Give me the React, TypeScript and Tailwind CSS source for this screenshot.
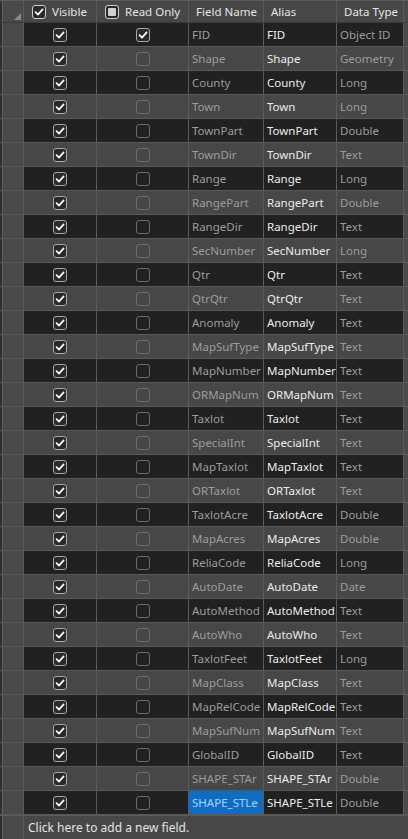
import React from "react";

type Row = { name: string; alias: string; type: string; ro?: boolean };

const rows: Row[] = [
  { name: "FID", alias: "FID", type: "Object ID", ro: true },
  { name: "Shape", alias: "Shape", type: "Geometry" },
  { name: "County", alias: "County", type: "Long" },
  { name: "Town", alias: "Town", type: "Long" },
  { name: "TownPart", alias: "TownPart", type: "Double" },
  { name: "TownDir", alias: "TownDir", type: "Text" },
  { name: "Range", alias: "Range", type: "Long" },
  { name: "RangePart", alias: "RangePart", type: "Double" },
  { name: "RangeDir", alias: "RangeDir", type: "Text" },
  { name: "SecNumber", alias: "SecNumber", type: "Long" },
  { name: "Qtr", alias: "Qtr", type: "Text" },
  { name: "QtrQtr", alias: "QtrQtr", type: "Text" },
  { name: "Anomaly", alias: "Anomaly", type: "Text" },
  { name: "MapSufType", alias: "MapSufType", type: "Text" },
  { name: "MapNumber", alias: "MapNumber", type: "Text" },
  { name: "ORMapNum", alias: "ORMapNum", type: "Text" },
  { name: "Taxlot", alias: "Taxlot", type: "Text" },
  { name: "SpecialInt", alias: "SpecialInt", type: "Text" },
  { name: "MapTaxlot", alias: "MapTaxlot", type: "Text" },
  { name: "ORTaxlot", alias: "ORTaxlot", type: "Text" },
  { name: "TaxlotAcre", alias: "TaxlotAcre", type: "Double" },
  { name: "MapAcres", alias: "MapAcres", type: "Double" },
  { name: "ReliaCode", alias: "ReliaCode", type: "Long" },
  { name: "AutoDate", alias: "AutoDate", type: "Date" },
  { name: "AutoMethod", alias: "AutoMethod", type: "Text" },
  { name: "AutoWho", alias: "AutoWho", type: "Text" },
  { name: "TaxlotFeet", alias: "TaxlotFeet", type: "Long" },
  { name: "MapClass", alias: "MapClass", type: "Text" },
  { name: "MapRelCode", alias: "MapRelCode", type: "Text" },
  { name: "MapSufNum", alias: "MapSufNum", type: "Text" },
  { name: "GlobalID", alias: "GlobalID", type: "Text" },
  { name: "SHAPE_STAr", alias: "SHAPE_STAr", type: "Double" },
  { name: "SHAPE_STLe", alias: "SHAPE_STLe", type: "Double" },
];

const Check = () => (
  <svg width="10" height="10" viewBox="0 0 10 10" fill="none">
    <path d="M1.5 5.2 L4 7.6 L8.6 2.4" stroke="#ffffff" strokeWidth="1.7" strokeLinecap="round" strokeLinejoin="round" />
  </svg>
);

const CheckedBox = ({ header }: { header?: boolean }) => (
  <div
    className={
      "flex h-[14px] w-[14px] items-center justify-center rounded-[3px] border bg-[#2a2a2a] " +
      (header ? "border-[#cfcfcf]" : "border-[#a8a8a8]")
    }
  >
    <Check />
  </div>
);

const EmptyBox = () => (
  <div className="h-[14px] w-[14px] rounded-[3px] border border-[#6c6c6c]" />
);

const RowHeader = ({ children }: { children?: React.ReactNode }) => (
  <div className="flex h-full">
    <div className="w-[2px] bg-[#303030]" />
    <div className="w-[1px] bg-[#5f5f5f]" />
    <div className="relative flex-1 bg-[#4a4a4a] border-r border-[#5a5a5a]">{children}</div>
  </div>
);

export default function App() {
  const font = { fontFamily: '"Segoe UI", "Noto Sans", "Open Sans", sans-serif' };
  const cols = "grid grid-cols-[24px_73px_92px_75px_73px_67px_4px]";
  return (
    <div className="h-[839px] w-[408px] overflow-hidden bg-[#4a4a4a] text-[11.5px] leading-none" style={font}>
      {/* header */}
      <div className={cols + " h-[23px] border-t border-[#5c5c5c] border-b border-b-[#3a3a3a] bg-[#474747] text-[#e4e4e4]"}>
        <RowHeader>
          <svg className="absolute left-[11px] top-[12px]" width="7" height="7" viewBox="0 0 7 7">
            <path d="M7 0 L7 7 L0 7 Z" fill="#8c8c8c" />
          </svg>
        </RowHeader>
        <div className="flex items-center gap-[6px] border-r border-[#5a5a5a] pl-[8px]">
          <CheckedBox header />
          <span>Visible</span>
        </div>
        <div className="flex items-center gap-[6px] border-r border-[#5a5a5a] pl-[8px]">
          <div className="flex h-[14px] w-[14px] items-center justify-center rounded-[3px] border border-[#cfcfcf] bg-[#2a2a2a]">
            <div className="h-[8px] w-[8px] rounded-[1px] bg-[#cfcfcf]" />
          </div>
          <span>Read Only</span>
        </div>
        <div className="flex items-center border-r border-[#5a5a5a] pl-[7px]">Field Name</div>
        <div className="flex items-center border-r border-[#5a5a5a] pl-[7px]">Alias</div>
        <div className="flex items-center border-r border-[#5a5a5a] pl-[7px]">Data Type</div>
        <div className="bg-[#4a4a4a]" />
      </div>

      {rows.map((r, i) => {
        const dark = i % 2 === 0;
        const bg = dark ? "bg-[#212121]" : "bg-[#474747]";
        const last = i === rows.length - 1;
        return (
          <div key={r.name} className={cols + " h-[24px] border-b border-[#585858]"}>
            <RowHeader />
            <div className={"flex items-center justify-center border-r border-[#5a5a5a] " + bg}>
              <CheckedBox />
            </div>
            <div className={"flex items-center justify-center border-r border-[#5a5a5a] " + bg}>
              {r.ro ? <CheckedBox /> : <EmptyBox />}
            </div>
            <div
              className={
                "flex items-center overflow-hidden whitespace-nowrap border-r border-[#5a5a5a] pl-[3px] " +
                (last ? "bg-[#0e6cc4] text-[#a8d4ff]" : bg + " text-[#9c9c9c]")
              }
            >
              {r.name}
            </div>
            <div className={"flex items-center overflow-hidden whitespace-nowrap border-r border-[#5a5a5a] pl-[3px] text-[#ececec] " + bg}>
              {r.alias}
            </div>
            <div className={"flex items-center overflow-hidden whitespace-nowrap border-r border-[#5a5a5a] pl-[3px] text-[#9c9c9c] " + bg}>
              {r.type}
            </div>
            <div className="bg-[#4a4a4a]" />
          </div>
        );
      })}

      {/* footer */}
      <div className="grid h-[24px] grid-cols-[24px_1fr] border-t border-[#5c5c5c]">
        <RowHeader />
        <div className="flex items-center bg-[#474747] pl-[4px] text-[12px] text-[#e4e4e4]">Click here to add a new field.</div>
      </div>
    </div>
  );
}
